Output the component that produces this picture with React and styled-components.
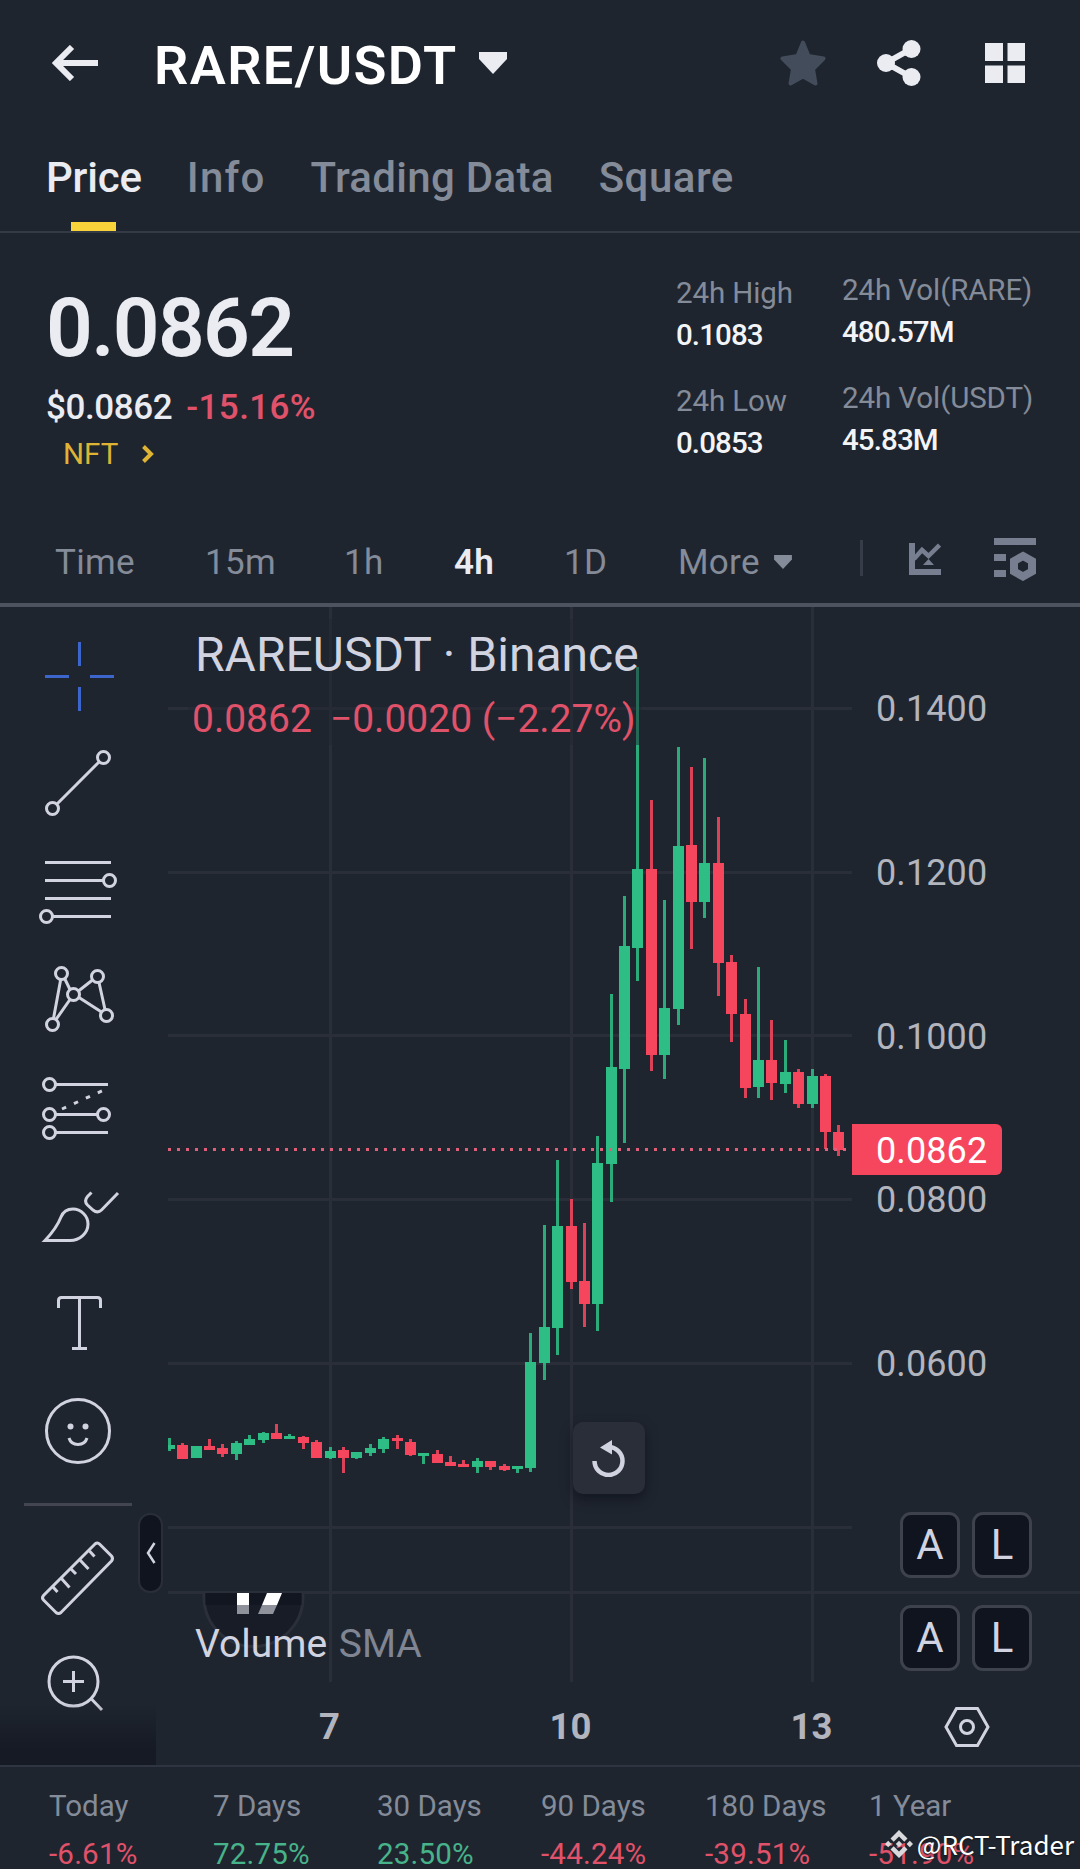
import React from "react";
import styled, { createGlobalStyle } from "styled-components";

const GlobalStyle = createGlobalStyle`
  * {
    box-sizing: border-box;
  }
  body {
    margin: 0;
    background-color: #1f252f;
    font-family: Roboto, "Liberation Sans", sans-serif;
  }
  svg {
    display: block;
    flex-shrink: 0;
  }
`;

const Page = styled.div`
  position: relative;
  width: 1080px;
  height: 1869px;
  overflow: hidden;
  background-color: #1f252f;
  color: #eaecf2;
`;

const Header = styled.header`
  display: flex;
  align-items: center;
  height: 126px;
  padding: 0 55px 0 52px;
`;

const Title = styled.h1`
  margin: 6px 21px 0 56px;
  font-size: 54px;
  line-height: 60px;
  font-weight: 600;
  letter-spacing: 1.4px;
  color: #ffffff;
`;

const HeaderActions = styled.div`
  display: flex;
  align-items: center;
  margin-left: auto;
`;

const ShareIcon = styled.svg`
  margin: 0 64px 0 51px;
`;

const Tabs = styled.nav`
  display: flex;
  gap: 45px;
  height: 107px;
  padding: 27px 0 0 46px;
  border-bottom: 2px solid #333a45;
`;

const Tab = styled.div`
  display: flex;
  flex-direction: column;
  align-items: center;
  font-size: 42px;
  line-height: 50px;
  font-weight: 500;
  letter-spacing: ${(props) => props.$spacing || 0}px;
  color: ${(props) => (props.$active ? "#eaecf2" : "#848b99")};
  &::after {
    content: "";
    width: 45px;
    height: 9px;
    margin-top: 19px;
    background-color: ${(props) => (props.$active ? "#f8d33a" : "transparent")};
  }
`;

const Summary = styled.section`
  display: flex;
  height: 288px;
  padding-left: 46px;
`;

const PriceBlock = styled.div`
  width: 630px;
  padding-top: 50px;
`;

const LastPrice = styled.div`
  font-size: 82px;
  line-height: 90px;
  font-weight: 600;
  letter-spacing: -1.7px;
`;

const Change = styled.div`
  display: flex;
  gap: 14px;
  margin-top: 12px;
  font-size: 35px;
  line-height: 46px;
  font-weight: 500;
  letter-spacing: -0.4px;
  & span {
    letter-spacing: 0.4px;
    color: #e0526a;
  }
`;

const TagLink = styled.div`
  display: flex;
  align-items: center;
  gap: 24px;
  margin: 5px 0 0 17px;
  font-size: 29.5px;
  line-height: 36px;
  color: #dfb435;
`;

const StatColumn = styled.div`
  width: ${(props) => props.$width}px;
  padding-top: ${(props) => props.$top}px;
`;

const Stat = styled.div`
  margin-bottom: 29.5px;
  font-size: 29.5px;
  line-height: 36px;
  white-space: nowrap;
  color: #848b99;
  letter-spacing: -0.1px;
  & strong {
    display: block;
    margin-top: 6.5px;
    font-weight: 500;
    letter-spacing: -0.9px;
    color: #f3f4f8;
  }
`;

const IntervalBar = styled.div`
  display: flex;
  align-items: center;
  height: 86px;
  padding-left: 55px;
  border-bottom: 4px solid #4d545f;
`;

const Interval = styled.div`
  width: ${(props) => props.$width}px;
  display: flex;
  align-items: center;
  gap: 14px;
  font-size: 35px;
  letter-spacing: 0.3px;
  font-weight: ${(props) => (props.$active ? 600 : 400)};
  color: ${(props) => (props.$active ? "#eaecf2" : "#848b99")};
`;

const Separator = styled.div`
  width: 3px;
  height: 36px;
  margin: 0 46px 8px 0;
  background-color: #363d49;
`;

const BarIcon = styled.svg`
  margin-bottom: 7px;
  & + & {
    margin-left: 53px;
  }
`;

const ChartSection = styled.section`
  position: relative;
  display: flex;
  height: 1158px;
`;

const ToolRail = styled.aside`
  width: 168px;
  padding-top: 14px;
`;

const ToolButton = styled.div`
  height: 108px;
  padding: 12px 36px;
`;

const ToolDivider = styled.div`
  width: 108px;
  height: 3px;
  margin: 18px 0 18px 24px;
  background-color: #434651;
`;

const RailFade = styled.div`
  position: absolute;
  left: 0;
  bottom: 0;
  width: 156px;
  height: 62px;
  background: linear-gradient(to bottom, rgba(19, 23, 34, 0), #151a25 75%);
`;

const RailHandle = styled.div`
  position: absolute;
  left: 138px;
  top: 906px;
  width: 25px;
  height: 80px;
  display: flex;
  align-items: center;
  justify-content: center;
  border: 2px solid #2a2e39;
  border-radius: 12px;
  background-color: #10141e;
`;

const ChartBody = styled.div`
  display: grid;
  grid-template-columns: 684px 228px;
  grid-template-rows: 984px 91px 83px;
`;

const Plot = styled.div`
  position: relative;
  grid-row: 1 / 3;
`;

const LegendTitle = styled.div`
  position: absolute;
  left: 20px;
  top: 12px;
  width: 454px;
  height: 72px;
  padding: 0 0 0 7px;
  font-size: 48px;
  line-height: 71px;
  white-space: nowrap;
  color: #d1d4e0;
  background-color: rgba(31, 37, 47, 0.5);
`;

const LegendValues = styled.div`
  position: absolute;
  left: 20px;
  top: 84px;
  display: flex;
  gap: 18px;
  width: 454px;
  height: 54px;
  padding-left: 4px;
  font-size: 39px;
  line-height: 56px;
  white-space: nowrap;
  color: #e0526a;
  background-color: rgba(31, 37, 47, 0.5);
`;

const VolumeLegend = styled.div`
  position: absolute;
  left: 27px;
  top: 1012px;
  font-size: 39px;
  line-height: 50px;
  color: #d1d4e0;
  & span {
    margin-left: 2px;
    color: #7f8593;
  }
`;

const ResetButton = styled.div`
  position: absolute;
  left: 405px;
  top: 815px;
  width: 72px;
  height: 72px;
  display: flex;
  align-items: center;
  justify-content: center;
  border-radius: 10px;
  background-color: #2a2e39;
  box-shadow: 0 5px 12px rgba(8, 11, 20, 0.55);
`;

const PriceScale = styled.div`
  position: relative;
  display: flex;
  flex-direction: column;
  justify-content: space-between;
  padding: 20px 0 13px;
`;

const PriceLabel = styled.div`
  height: 163.8px;
  padding-left: 24px;
  font-size: 36px;
  letter-spacing: 0.1px;
  line-height: 164px;
  color: #b2b5be;
`;

const PriceTag = styled.div`
  position: absolute;
  left: 0;
  top: 517px;
  width: 150px;
  height: 51px;
  padding-left: 24px;
  border-radius: 0 6px 6px 0;
  font-size: 36px;
  letter-spacing: 0.1px;
  line-height: 54px;
  color: #ffffff;
  background-color: #f6465d;
`;

const VolumeScale = styled.div`
  padding-top: 11px;
  border-top: 3px solid #2a2e38;
`;

const ScaleButtons = styled.div`
  display: flex;
  gap: 12px;
  padding-left: 48px;
`;

const ScaleButton = styled.div`
  width: 60px;
  height: 66px;
  border: 3px solid #3e424d;
  border-radius: 11px;
  font-size: 42px;
  line-height: 60px;
  text-align: center;
  color: #d1d4e0;
  background-color: #10141e;
`;

const TimeScale = styled.div`
  grid-column: 1 / 3;
  display: flex;
  align-items: center;
  padding: 6px 0 0 41px;
  & svg {
    margin-left: 12px;
  }
`;

const TimeLabel = styled.div`
  width: 241px;
  font-size: 36.5px;
  font-weight: 700;
  text-align: center;
  color: #b2b5be;
`;

const Performance = styled.section`
  display: flex;
  padding: 21px 0 0 49px;
  border-top: 2px solid #2f3641;
`;

const Period = styled.div`
  width: 164px;
  flex-shrink: 0;
  font-size: 29.5px;
  line-height: 36px;
  white-space: nowrap;
  color: #848b99;
  & div {
    margin-top: 12px;
    letter-spacing: 0.2px;
    color: ${(props) => (props.$up ? "#47b38a" : "#e0526a")};
  }
`;

const Watermark = styled.div`
  position: absolute;
  right: 6px;
  bottom: 6px;
  display: flex;
  align-items: center;
  gap: 4px;
  font-family: "Noto Sans CJK SC", "Noto Sans", sans-serif;
  font-size: 26px;
  line-height: 38px;
  color: #ffffff;
  text-shadow: 0 1px 2px rgba(0, 0, 0, 0.6);
`;

const UP = "#2ebd85";
const DOWN = "#f6465d";

// [center x, high, body top, body bottom, low, rising]
const candles = [
  [169.5, 1438, 1445, 1449, 1451, 1],
  [182.5, 1443, 1445, 1459, 1459, 0],
  [196.5, 1446, 1446, 1458, 1458, 1],
  [209.5, 1439, 1446, 1450, 1450, 0],
  [222.5, 1444, 1448, 1454, 1457, 0],
  [236.5, 1441, 1443, 1454, 1460, 1],
  [249.5, 1435, 1439, 1445, 1445, 1],
  [263.5, 1432, 1433, 1440, 1443, 1],
  [276.5, 1424, 1433, 1439, 1439, 0],
  [289.5, 1434, 1436, 1439, 1439, 1],
  [303.5, 1436, 1437, 1443, 1449, 0],
  [316.5, 1440, 1442, 1458, 1458, 0],
  [330.5, 1447, 1451, 1458, 1459, 1],
  [343.5, 1447, 1450, 1458, 1473, 0],
  [356.5, 1452, 1452, 1458, 1459, 1],
  [370.5, 1444, 1448, 1453, 1456, 1],
  [383.5, 1437, 1439, 1449, 1453, 1],
  [397.5, 1435, 1438, 1441, 1449, 0],
  [410.5, 1439, 1442, 1455, 1456, 0],
  [423.5, 1453, 1453, 1456, 1464, 1],
  [437.5, 1450, 1454, 1463, 1463, 0],
  [450.5, 1456, 1462, 1466, 1466, 0],
  [463.5, 1460, 1464, 1467, 1467, 0],
  [477.5, 1458, 1461, 1467, 1473, 1],
  [490.5, 1461, 1461, 1467, 1470, 0],
  [504.5, 1464, 1466, 1470, 1471, 0],
  [517.5, 1466, 1466, 1469, 1473, 1],
  [530.5, 1333, 1362, 1468, 1472, 1],
  [544.5, 1225, 1327, 1363, 1380, 1],
  [557.5, 1160, 1226, 1328, 1355, 1],
  [571.5, 1199, 1226, 1282, 1289, 0],
  [584.5, 1223, 1281, 1304, 1327, 0],
  [597.5, 1136, 1163, 1304, 1331, 1],
  [611.5, 994, 1067, 1164, 1202, 1],
  [624.5, 896, 946, 1069, 1143, 1],
  [637.5, 667, 869, 948, 981, 1],
  [651.5, 800, 869, 1055, 1071, 0],
  [664.5, 900, 1008, 1055, 1079, 1],
  [678.5, 747, 846, 1009, 1025, 1],
  [691.5, 767, 845, 902, 949, 0],
  [704.5, 758, 863, 902, 918, 1],
  [718.5, 817, 863, 963, 996, 0],
  [731.5, 955, 962, 1014, 1042, 0],
  [745.5, 999, 1014, 1088, 1098, 0],
  [758.5, 967, 1060, 1087, 1098, 1],
  [771.5, 1020, 1060, 1083, 1100, 0],
  [785.5, 1040, 1072, 1084, 1093, 1],
  [798.5, 1069, 1072, 1104, 1108, 0],
  [812.5, 1069, 1076, 1104, 1108, 1],
  [825.5, 1074, 1076, 1132, 1149, 0],
  [838.5, 1125, 1132, 1150, 1156, 0],
];

const gridRows = [708.5, 872.5, 1035.5, 1199.5, 1363.5, 1527.5];
const gridColumns = [330.5, 571.5, 812.5];

const tabs = [
  { label: "Price", spacing: -0.2 },
  { label: "Info", spacing: 1.2 },
  { label: "Trading Data", spacing: 0.3 },
  { label: "Square", spacing: 0.5 },
];

const intervals = [
  { label: "Time", width: 150 },
  { label: "15m", width: 139 },
  { label: "1h", width: 110 },
  { label: "4h", width: 110 },
  { label: "1D", width: 114 },
];

const periods = [
  ["Today", "-6.61%"],
  ["7 Days", "72.75%"],
  ["30 Days", "23.50%"],
  ["90 Days", "-44.24%"],
  ["180 Days", "-39.51%"],
  ["1 Year", "-51.90%"],
];

const tools = {
  cross: (
    <path d="M9 43.5h24M54 43.5h24M43.5 9v24M43.5 54v24" stroke="#3c66cb" />
  ),
  trend: (
    <>
      <path d="M21 63 63 21" />
      <circle cx="16.5" cy="67.5" r="6" />
      <circle cx="67.5" cy="16.5" r="6" />
    </>
  ),
  fib: (
    <>
      <path d="M9 13.5h66M9 31.5h58M9 49.5h66M17 67.5h58" />
      <circle cx="73.5" cy="31.5" r="6" />
      <circle cx="10.5" cy="67.5" r="6" />
    </>
  ),
  pattern: (
    <>
      <path d="M24.7 22.5 17.5 61.5M28.6 21.5 34 32.5M42.5 34 56.5 23M63 25.5 69 52.5M43 40.5 65.5 55M34 42.5 20 62.5" />
      <circle cx="25.5" cy="16.5" r="6" />
      <circle cx="61.5" cy="19.5" r="6" />
      <circle cx="37.5" cy="37.5" r="6" />
      <circle cx="16.5" cy="67.5" r="6" />
      <circle cx="70.5" cy="58.5" r="6" />
    </>
  ),
  forecast: (
    <>
      <path d="M19.5 19.5H72M19.5 49.5h42M19.5 67.5H72" />
      <path d="M26 44 68 25" strokeDasharray="4.5 8.6" />
      <circle cx="13.5" cy="19.5" r="6" />
      <circle cx="13.5" cy="49.5" r="6" />
      <circle cx="67.5" cy="49.5" r="6" />
      <circle cx="13.5" cy="67.5" r="6" />
    </>
  ),
  brush: (
    <>
      <path d="M9 67.5H34C44 67.5 52 60 52 51C52 43 45 36 37 36C31 36 27 39 25 44C21.500 53 17 59 9 67.5Z" />
      <path d="M55.5 19.500 51.500 23.500C49 26.500 49 29.500 51.500 32L57 37C60 39.500 63 39.500 65.500 37L82 20" />
    </>
  ),
  text: (
    <path d="M22.5 27V19.5Q22.5 16.5 25.5 16.5H61.5Q64.5 16.5 64.5 19.5V27M43.5 16.5V67.5M36 67.5H51" />
  ),
  smile: (
    <>
      <circle cx="42" cy="42" r="31.5" />
      <circle cx="34.5" cy="37.5" r="3" fill="#d1d4e0" stroke="none" />
      <circle cx="49.5" cy="37.5" r="3" fill="#d1d4e0" stroke="none" />
      <path d="M33 49C35.500 57.500 48.500 57.500 51 49" />
    </>
  ),
  ruler: (
    <>
      <path d="M7.5 59.5Q5.500 62 7.500 64L20 76.500Q22.500 78.500 25 76.500L75.500 25Q77.500 22.500 75.500 20L63.500 8Q61.500 6 59 8Z" />
      <path d="M17 51 21.500 56M25 42 33.500 51.500M35 33 40 38M44 24 52.500 33M53.500 15 58.500 20.500" />
    </>
  ),
  zoom: (
    <>
      <circle cx="37.5" cy="37.5" r="24.500" />
      <path d="M37.500 27V48M27 37.500H48M55 54.500 66 66" />
    </>
  ),
};

const Tool = ({ name }) => (
  <ToolButton>
    <svg
      width="84"
      height="84"
      viewBox="0 0 84 84"
      fill="none"
      stroke="#d1d4e0"
      strokeWidth="3"
    >
      {tools[name]}
    </svg>
  </ToolButton>
);

const Caret = ({ width, height, color }) => (
  <svg width={width} height={height} viewBox="0 0 28 22">
    <path d="M0 0H28V7L14 22L0 7Z" fill={color} />
  </svg>
);

const PriceChart = () => (
  <svg width="684" height="1075" viewBox="168 607 684 1075">
    <g stroke="#2a2e38" strokeWidth="3">
      {gridRows.map((y) => (
        <path key={y} d={`M168 ${y}H852`} />
      ))}
      {gridColumns.map((x) => (
        <path key={x} d={`M${x} 607V1682`} />
      ))}
      <path d="M168 1592.5H852" />
    </g>
    {candles.map(([x, high, top, bottom, low, rising]) => (
      <g key={x} fill={rising ? UP : DOWN}>
        <rect x={x - 1.5} y={high} width="3" height={low - high} opacity="0.88" />
        <rect x={x - 5.5} y={top} width="11" height={bottom - top} />
      </g>
    ))}
    <path
      d="M168 1149.5H846"
      stroke="#e0607a"
      strokeWidth="3"
      strokeDasharray="3 6"
    />
    <clipPath id="logo-clip">
      <rect x="190" y="1593" width="130" height="70" />
    </clipPath>
    <g clipPath="url(#logo-clip)">
      <circle cx="253.5" cy="1597" r="49.5" fill="#171c27" stroke="#2a2f3a" strokeWidth="3" />
      <path d="M205.500 1593H301.500V1605H205.500Z" fill="#121620" />
      <path d="M237 1593H249V1605H237ZM267 1593H282L277 1605H262Z" fill="#ffffff" />
      <path d="M237 1605H249V1614H237ZM262 1605H277L273 1614H258Z" fill="#8f929b" />
    </g>
  </svg>
);

const App = () => {
  return (
    <>
      <GlobalStyle />
      <Page>
        <Header>
          <svg width="46" height="36" viewBox="0 0 46 36" fill="none" stroke="#eaecf2" strokeWidth="6">
            <path d="M4 18H46M20 2 4 18 20 34" />
          </svg>
          <Title>RARE/USDT</Title>
          <Caret width={28} height={22} color="#eaecf2" />
          <HeaderActions>
            <svg width="46" height="48" viewBox="780 40 46 48">
              <path
                d="M803 43.5 808.500 57 823.500 59.500 813 70 815.500 84.500 803 77.500 790.500 84.500 793 70 782.500 59.500 797.500 57Z"
                fill="#434c5a"
                stroke="#434c5a"
                strokeWidth="4"
                strokeLinejoin="round"
              />
            </svg>
            <ShareIcon width="44" height="48" viewBox="877 39 44 48">
              <path d="M911 49 886 63 911 77" fill="none" stroke="#eaecf2" strokeWidth="6" />
              <g fill="#eaecf2">
                <circle cx="886" cy="63" r="9" />
                <circle cx="911.5" cy="49" r="9" />
                <circle cx="911.5" cy="77" r="9" />
              </g>
            </ShareIcon>
            <svg width="40" height="40" viewBox="0 0 40 40">
              <path d="M0 0H18V18H0ZM22.5 0H40V18H22.5ZM0 22.5H18V40H0ZM22.5 22.5H40V40H22.5Z" fill="#eaecf2" />
            </svg>
          </HeaderActions>
        </Header>

        <Tabs>
          {tabs.map((tab, i) => (
            <Tab key={tab.label} $active={i === 0} $spacing={tab.spacing}>
              {tab.label}
            </Tab>
          ))}
        </Tabs>

        <Summary>
          <PriceBlock>
            <LastPrice>0.0862</LastPrice>
            <Change>
              $0.0862 <span>-15.16%</span>
            </Change>
            <TagLink>
              NFT
              <svg width="12" height="18" viewBox="0 0 12 18" fill="none" stroke="#dfb435" strokeWidth="4">
                <path d="M1.5 1.5 9 9 1.5 16.5" />
              </svg>
            </TagLink>
          </PriceBlock>
          <StatColumn $width={166} $top={41.5}>
            <Stat>
              24h High<strong>0.1083</strong>
            </Stat>
            <Stat>
              24h Low<strong>0.0853</strong>
            </Stat>
          </StatColumn>
          <StatColumn $width={230} $top={38.5}>
            <Stat>
              24h Vol(RARE)<strong>480.57M</strong>
            </Stat>
            <Stat>
              24h Vol(USDT)<strong>45.83M</strong>
            </Stat>
          </StatColumn>
        </Summary>

        <IntervalBar>
          {intervals.map((item) => (
            <Interval key={item.label} $width={item.width} $active={item.label === "4h"}>
              {item.label}
            </Interval>
          ))}
          <Interval $width={182}>
            More
            <Caret width={18} height={14} color="#848b99" />
          </Interval>
          <Separator />
          <BarIcon width="32" height="32" viewBox="909 542 32 32">
            <path d="M909 542H915V568H941V574H909Z" fill="#777e8f" />
            <path d="M914 558 922 549 928.5 555 939.5 544" fill="none" stroke="#777e8f" strokeWidth="4.5" />
            <path d="M923 564H934L928.5 558Z" fill="#777e8f" />
          </BarIcon>
          <BarIcon width="43" height="44" viewBox="994 537 43 44">
            <path
              d="M994 538H1036V545H994ZM994 554H1006V561H994ZM994 570H1006V577H994Z"
              fill="#777e8f"
            />
            <path d="M1023 556 1032 561V571.5L1023 576.5 1014 571.5V561Z" fill="none" stroke="#777e8f" strokeWidth="8" />
          </BarIcon>
        </IntervalBar>

        <ChartSection>
          <ToolRail>
            {["cross", "trend", "fib", "pattern", "forecast", "brush", "text", "smile"].map((name) => (
              <Tool key={name} name={name} />
            ))}
            <ToolDivider />
            <Tool name="ruler" />
            <Tool name="zoom" />
          </ToolRail>
          <ChartBody>
            <Plot>
              <PriceChart />
              <LegendTitle>RAREUSDT · Binance</LegendTitle>
              <LegendValues>
                <span>0.0862</span>
                <span>−0.0020 (−2.27%)</span>
              </LegendValues>
              <VolumeLegend>
                Volume <span>SMA</span>
              </VolumeLegend>
              <ResetButton>
                <svg width="34" height="38" viewBox="592 1439 34 38">
                  <path d="M594.5 1461A14 14 0 1 0 608.5 1447" fill="none" stroke="#d1d4e0" strokeWidth="4.5" />
                  <path d="M600 1447.5 612 1440V1454.5Z" fill="#d1d4e0" />
                </svg>
              </ResetButton>
            </Plot>
            <PriceScale>
              <div>
                {["0.1400", "0.1200", "0.1000", "0.0800", "0.0600"].map((price) => (
                  <PriceLabel key={price}>{price}</PriceLabel>
                ))}
              </div>
              <PriceTag>0.0862</PriceTag>
              <ScaleButtons>
                <ScaleButton>A</ScaleButton>
                <ScaleButton>L</ScaleButton>
              </ScaleButtons>
            </PriceScale>
            <VolumeScale>
              <ScaleButtons>
                <ScaleButton>A</ScaleButton>
                <ScaleButton>L</ScaleButton>
              </ScaleButtons>
            </VolumeScale>
            <TimeScale>
              <TimeLabel>7</TimeLabel>
              <TimeLabel>10</TimeLabel>
              <TimeLabel>13</TimeLabel>
              <svg width="46" height="40" viewBox="0 0 46 40" fill="none" stroke="#d1d4e0" strokeWidth="3">
                <path d="M12.5 1.5H33.5L44 20 33.5 38.5H12.5L2 20Z" />
                <circle cx="23" cy="20" r="6.5" />
              </svg>
            </TimeScale>
          </ChartBody>
          <RailFade />
          <RailHandle>
            <svg width="10" height="22" viewBox="0 0 10 22" fill="none" stroke="#d1d4e0" strokeWidth="2.5">
              <path d="M8.5 1 2 11 8.5 21" />
            </svg>
          </RailHandle>
        </ChartSection>

        <Performance>
          {periods.map(([label, value]) => (
            <Period key={label} $up={!value.startsWith("-")}>
              {label}
              <div>{value}</div>
            </Period>
          ))}
        </Performance>
        <Watermark>
          <svg width="28" height="28" viewBox="0 0 28 28" fill="#d9d9dc">
            <path d="M14 0 22.5 8.5 19.3 11.7 14 6.4 8.7 11.7 5.5 8.5ZM14 28 5.5 19.5 8.7 16.3 14 21.6 19.3 16.3 22.5 19.5ZM3.2 10.8 6.4 14 3.2 17.2 0 14ZM24.8 10.8 28 14 24.8 17.2 21.6 14ZM14 10.8 17.2 14 14 17.2 10.8 14Z" />
          </svg>
          @RCT-Trader
        </Watermark>
      </Page>
    </>
  );
};

export default App;
